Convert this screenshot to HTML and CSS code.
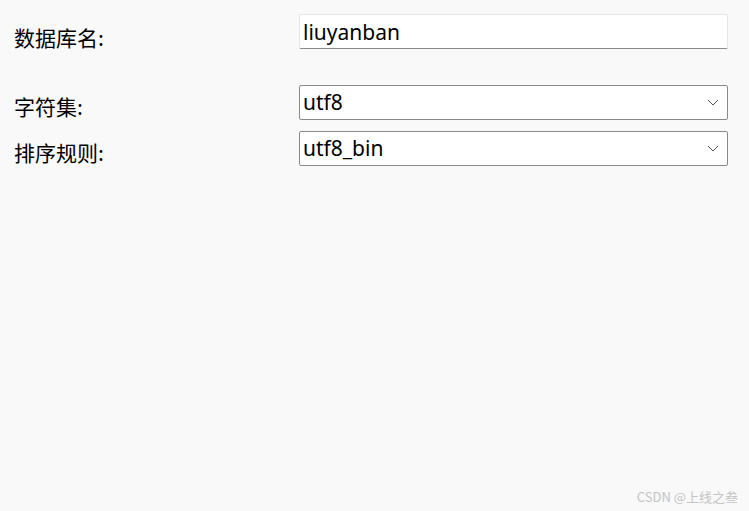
FILE: index.html
```html
<!DOCTYPE html>
<html lang="zh">
<head>
<meta charset="utf-8">
<link rel="stylesheet" href="styles.css">
</head>
<body>
<div class="form">
  <div class="row row-name">
    <label class="label">数据库名:</label>
    <div class="input">liuyanban</div>
  </div>
  <div class="row row-charset">
    <label class="label">字符集:</label>
    <div class="select"><span class="value">utf8</span>
      <svg class="chev" width="12" height="7" viewBox="0 0 12 7"><path d="M1 1 L6 6 L11 1" fill="none" stroke="#555" stroke-width="1"/></svg>
    </div>
  </div>
  <div class="row row-collate">
    <label class="label">排序规则:</label>
    <div class="select"><span class="value">utf8_bin</span>
      <svg class="chev" width="12" height="7" viewBox="0 0 12 7"><path d="M1 1 L6 6 L11 1" fill="none" stroke="#555" stroke-width="1"/></svg>
    </div>
  </div>
</div>
<div class="watermark">CSDN @上线之叁</div>
</body>
</html>
```
FILE: styles.css
```css
html, body {
  margin: 0;
  padding: 0;
  background: #f9f9f9;
  width: 749px;
  height: 511px;
  overflow: hidden;
}
body {
  font-family: "Noto Sans", "Noto Sans CJK SC", sans-serif;
  color: #000;
  position: relative;
}
.form {
  padding: 14px 0 0 14px;
  display: flex;
  flex-direction: column;
}
.row {
  display: flex;
  align-items: center;
  height: 35px;
}
.row-charset { margin-top: 36px; }
.row-collate { margin-top: 11px; }
.label {
  box-sizing: border-box;
  width: 285px;
  font-size: 21px;
  font-family: "Noto Sans CJK SC", sans-serif;
  line-height: 1;
  padding-top: 7px;
}
.row-name .label { padding-top: 11px; }
.input, .select {
  box-sizing: border-box;
  width: 429px;
  height: 35px;
  display: flex;
  align-items: center;
  padding-left: 3px;
  font-size: 21px;
  background: #fff;
}
.input {
  border: 1px solid #e6e6e6;
  border-bottom: 1px solid #8a8a8a;
  border-radius: 2px;
}
.select {
  border: 1px solid #8a8a8a;
  border-radius: 2px;
  justify-content: space-between;
  padding-right: 8px;
}
.value { line-height: 1; }
.chev { display: block; }
.watermark {
  position: absolute;
  right: 11px;
  top: 487px;
  font-size: 13px;
  color: #c4c4c4;
  font-family: "Noto Sans CJK SC", sans-serif;
}
```
